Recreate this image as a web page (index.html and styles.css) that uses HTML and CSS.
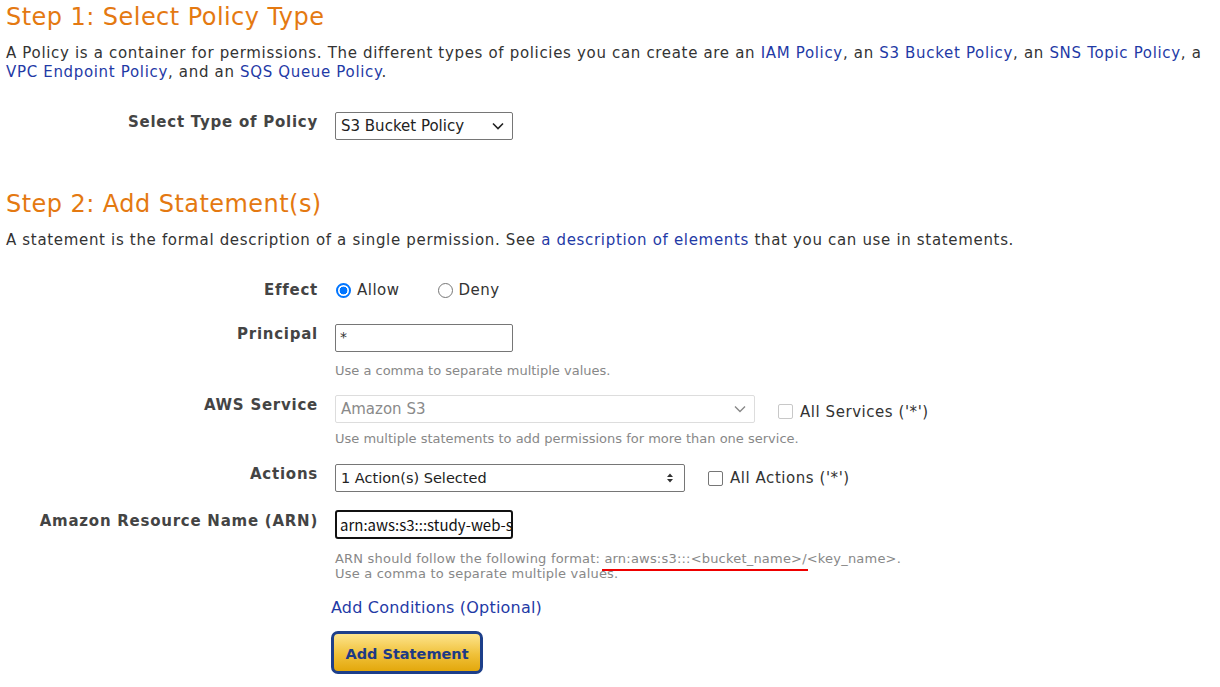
FILE: index.html
```html
<!DOCTYPE html>
<html>
<head>
<meta charset="utf-8">
<link rel="stylesheet" href="styles.css">
</head>
<body>
<div class="page">
  <h1 class="step">Step 1: Select Policy Type</h1>
  <p class="intro">A Policy is a container for permissions. The different types of policies you can create are an <a class="lnk">IAM Policy</a>, an <a class="lnk">S3 Bucket Policy</a>, an <a class="lnk">SNS Topic Policy</a>, a <a class="lnk">VPC Endpoint Policy</a>, and an <a class="lnk">SQS Queue Policy</a>.</p>

  <div class="row row-type">
    <div class="lbl">Select Type of Policy</div>
    <div class="ctl">
      <div class="sel sel-type"><span>S3 Bucket Policy</span>
        <svg class="chev" width="12" height="8" viewBox="0 0 12 8"><path d="M1 1.5 L6 6.5 L11 1.5" fill="none" stroke="#222" stroke-width="1.6"/></svg>
      </div>
    </div>
  </div>

  <h1 class="step step2">Step 2: Add Statement(s)</h1>
  <p class="intro">A statement is the formal description of a single permission. See <a class="lnk">a description of elements</a> that you can use in statements.</p>

  <div class="row row-effect">
    <div class="lbl">Effect</div>
    <div class="ctl radios">
      <span class="radio on"></span><span class="opt">Allow</span>
      <span class="radio deny"></span><span class="opt">Deny</span>
    </div>
  </div>

  <div class="row row-principal">
    <div class="lbl">Principal</div>
    <div class="ctl">
      <div class="inp">*</div>
      <div class="hint">Use a comma to separate multiple values.</div>
    </div>
  </div>

  <div class="row row-service">
    <div class="lbl">AWS Service</div>
    <div class="ctl">
      <div class="line">
        <div class="sel sel-service"><span>Amazon S3</span>
          <svg class="chev" width="12" height="8" viewBox="0 0 12 8"><path d="M1 1.5 L6 6.5 L11 1.5" fill="none" stroke="#888" stroke-width="1.4"/></svg>
        </div>
        <span class="cb cb-dis"></span><span class="cbtxt">All Services ('*')</span>
      </div>
      <div class="hint">Use multiple statements to add permissions for more than one service.</div>
    </div>
  </div>

  <div class="row row-actions">
    <div class="lbl">Actions</div>
    <div class="ctl">
      <div class="line">
        <div class="sel sel-actions"><span>1 Action(s) Selected</span>
          <svg class="updown" width="8" height="12" viewBox="0 0 8 12"><path d="M4 1.5 L7 5 L1 5 Z M4 10.5 L7 7 L1 7 Z" fill="#333"/></svg>
        </div>
        <span class="cb"></span><span class="cbtxt">All Actions ('*')</span>
      </div>
    </div>
  </div>

  <div class="row row-arn">
    <div class="lbl">Amazon Resource Name (ARN)</div>
    <div class="ctl">
      <div class="inp inp-arn"><span>arn:aws:s3:::study-web-s3</span></div>
      <div class="hint hint-arn">ARN should follow the following format: <span class="mark">arn:aws:s3:::&lt;bucket_name&gt;/</span>&lt;key_name&gt;.<br>Use a comma to separate multiple values.</div>
    </div>
  </div>

  <div class="foot">
    <a class="lnk cond">Add Conditions (Optional)</a>
    <div class="btn">Add Statement</div>
  </div>
</div>
</body>
</html>
```

FILE: styles.css
```css
html, body {
  margin: 0;
  padding: 0;
  background: #fff;
}
.page {
  padding: 0 0 0 6px;
  font-family: "DejaVu Sans", sans-serif;
  font-size: 15px;
  color: #333;
}
.step {
  margin: 0;
  padding-top: 2px;
  font-size: 24px;
  line-height: 30px;
  font-weight: normal;
  letter-spacing: 0.45px;
  color: #e47911;
}
.step2 {
  margin-top: 47px;
}
.intro {
  margin: 12px 0 0 0;
  line-height: 19px;
  letter-spacing: 0.67px;
}
.lnk {
  color: #1f3aa6;
  text-decoration: none;
}
.row {
  display: grid;
  grid-template-columns: 312px auto;
  column-gap: 17px;
  align-items: start;
}
.lbl {
  text-align: right;
  font-weight: bold;
  color: #444;
  line-height: 20px;
  letter-spacing: 0.75px;
}
.ctl {
  display: flex;
  flex-direction: column;
  align-items: flex-start;
}
.row-type { margin-top: 30px; }
.sel {
  display: flex;
  align-items: center;
  justify-content: space-between;
  box-sizing: border-box;
  height: 28px;
  border: 1px solid #767676;
  border-radius: 2px;
  padding: 0 8px 0 5px;
  background: #fff;
  color: #222;
}
.sel-type { width: 178px; }
.sel-service {
  width: 420px;
  border-color: #ddd;
  color: #8a8a8a;
}
.sel-actions { width: 350px; font-size: 14.5px; padding-right: 10px; }
.row-effect { margin-top: 30px; }
.radios { flex-direction: row; align-items: center; height: 20px; }
.opt { letter-spacing: 0.5px; }
.radio {
  box-sizing: border-box;
  width: 15px;
  height: 15px;
  border-radius: 50%;
  border: 1px solid #767676;
  margin-left: 1px;
  margin-right: 6px;
}
.radio.on {
  border: 2px solid #0075ff;
  background: radial-gradient(circle, #0075ff 0 3.6px, #fff 4.2px);
}
.radio.deny { margin-left: 38px; }
.row-principal { margin-top: 24px; }
.inp {
  box-sizing: border-box;
  width: 178px;
  height: 28px;
  border: 1px solid #767676;
  border-radius: 2px;
  padding: 4px 4px 0;
  color: #333;
  font-size: 14px;
}
.hint {
  margin-top: 11px;
  font-size: 13px;
  line-height: 15px;
  color: #888;
}
.row-service { margin-top: 17px; }
.line {
  display: flex;
  align-items: center;
}
.cb {
  box-sizing: border-box;
  width: 15px;
  height: 15px;
  border: 1px solid #767676;
  border-radius: 2px;
  margin-left: 23px;
  margin-right: 7px;
}
.cbtxt { color: #333; letter-spacing: 0.55px; }
.cb-dis { border-color: #c8c8c8; margin-top: 5px; }
.row-service .cbtxt { margin-top: 5px; }
.row-service .hint { margin-top: 8px; }
.row-actions { margin-top: 18px; }
.row-actions .cb { margin-top: 1px; }
.row-arn { margin-top: 18px; }
.row-arn .lbl { padding-top: 1px; }
.inp-arn {
  height: 29px;
  border: 2px solid #111;
  border-radius: 3px;
  padding: 3px 3px 0;
  overflow: hidden;
  white-space: nowrap;
  color: #111;
  font-family: "Noto Sans CJK KR", "DejaVu Sans", sans-serif;
  font-size: 15px;
  line-height: 20px;
}
.hint-arn { margin-top: 12px; letter-spacing: 0.2px; }
.mark { position: relative; }
.mark::after {
  content: "";
  position: absolute;
  left: -2px;
  right: -1px;
  bottom: -5px;
  height: 2px;
  background: #e00;
}
.foot {
  display: flex;
  flex-direction: column;
  align-items: flex-start;
  padding-left: 325px;
  margin-top: 17px;
}
.cond { font-size: 16px; line-height: 20px; letter-spacing: 0.2px; }
.btn {
  margin-top: 13px;
  box-sizing: border-box;
  width: 152px;
  height: 43px;
  border: 3px solid #1d3f8a;
  border-radius: 7px;
  background: linear-gradient(#fde48c, #f0c13a 55%, #e3a80c);
  color: #1d3a85;
  font-weight: bold;
  font-size: 14.5px;
  display: flex;
  align-items: center;
  justify-content: center;
  padding-top: 3px;
}
```
